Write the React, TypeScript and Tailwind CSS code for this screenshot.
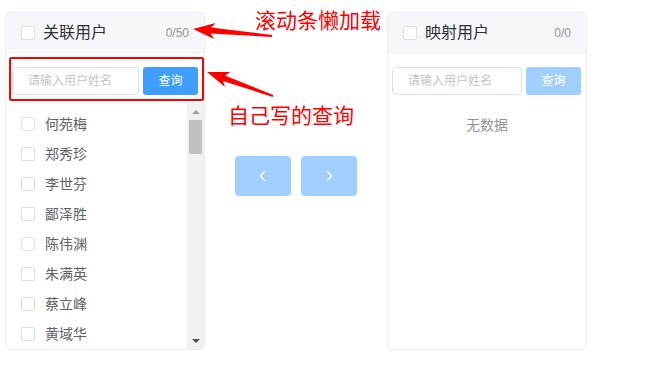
import React from 'react';

const names = ['何苑梅', '郑秀珍', '李世芬', '鄙泽胜', '陈伟渊', '朱满英', '蔡立峰', '黄域华'];

const font = { fontFamily: '"Liberation Sans", "Noto Sans CJK SC", sans-serif' };

function Checkbox() {
    return <span className="inline-block w-[14px] h-[14px] shrink-0 rounded-[2px] border border-[#dcdfe6] bg-white" />;
}

function PanelHeader({ title, count, padLeft }: { title: string; count: string; padLeft: string }) {
    return (
        <div className={`h-[40px] shrink-0 flex items-center bg-[#f5f7fa] border-b border-[#ebeef5] rounded-t-[4px] ${padLeft} pr-[15px]`}>
            <Checkbox />
            <span className="ml-[8px] text-[16px] text-[#303133] leading-none">{title}</span>
            <span className="ml-auto text-[12px] text-[#909399]">{count}</span>
        </div>
    );
}

function Filter({ inputW, active, pad }: { inputW: string; active: boolean; pad: string }) {
    return (
        <div className={`flex gap-[4px] pt-[14px] pb-[8px] ${pad}`}>
            <div className={`${inputW} h-[28px] rounded-[4px] border border-[#dcdfe6] bg-white flex items-center px-[15px] text-[12px] text-[#c0c4cc]`}>
                请输入用户姓名
            </div>
            <div
                className={`w-[55px] h-[28px] rounded-[3px] flex items-center justify-center text-[12px] text-white ${active ? 'bg-[#409eff]' : 'bg-[#a0cfff]'}`}
            >
                查询
            </div>
        </div>
    );
}

function FakeScrollbar() {
    return (
        <div className="w-[17px] shrink-0 bg-[#f1f1f1] flex flex-col items-center">
            <div className="h-[17px] flex items-center justify-center">
                <span className="w-0 h-0 border-x-[4px] border-x-transparent border-b-[4px] border-b-[#a3a3a3]" />
            </div>
            <div className="w-[13px] h-[34px] bg-[#c1c1c1]" />
            <div className="flex-1" />
            <div className="h-[17px] flex items-center justify-center">
                <span className="w-0 h-0 border-x-[4px] border-x-transparent border-t-[4px] border-t-[#505050]" />
            </div>
        </div>
    );
}

export default function App() {
    return (
        <div className="relative w-[652px] h-[367px] bg-white overflow-hidden" style={font}>
            <div className="flex items-start pt-[12px] pl-[5px]">
                {/* left panel */}
                <div className="w-[200px] h-[338px] border border-[#ebeef5] rounded-[4px] flex flex-col">
                    <PanelHeader title="关联用户" count="0/50" padLeft="pl-[15px]" />
                    <Filter inputW="w-[127px]" active pad="pl-[6px] pr-[5px]" />
                    <div className="flex-1 flex min-h-0 overflow-hidden rounded-b-[4px]">
                        <div className="flex-1 pt-[6px]">
                            {names.map((n) => (
                                <div key={n} className="h-[30px] flex items-center pl-[15px]">
                                    <Checkbox />
                                    <span className="ml-[10px] text-[14px] text-[#606266]">{n}</span>
                                </div>
                            ))}
                        </div>
                        <FakeScrollbar />
                    </div>
                </div>

                {/* transfer buttons */}
                <div className="flex gap-[10px] mt-[144px] mx-[30px]">
                    <div className="w-[56px] h-[40px] rounded-[4px] bg-[#a0cfff] flex items-center justify-center">
                        <svg width="10" height="12" viewBox="0 0 10 12" fill="none" stroke="white" strokeWidth="1.4">
                            <path d="M7 1 L2.5 6 L7 11" />
                        </svg>
                    </div>
                    <div className="w-[56px] h-[40px] rounded-[4px] bg-[#a0cfff] flex items-center justify-center">
                        <svg width="10" height="12" viewBox="0 0 10 12" fill="none" stroke="white" strokeWidth="1.4">
                            <path d="M3 1 L7.5 6 L3 11" />
                        </svg>
                    </div>
                </div>

                {/* right panel */}
                <div className="w-[200px] h-[338px] border border-[#ebeef5] rounded-[4px] flex flex-col">
                    <PanelHeader title="映射用户" count="0/0" padLeft="pl-[15px]" />
                    <Filter inputW="w-[130px]" active={false} pad="pl-[4px] pr-[5px]" />
                    <div className="pt-[12px] text-center text-[14px] text-[#909399]">无数据</div>
                </div>
            </div>

            {/* annotations */}
            <div className="absolute left-[9px] top-[57px] w-[195px] h-[44px] border-2 border-[#ff0000] rounded-[2px]" />
            <div className="absolute left-[255px] top-[7px] text-[21px] leading-[28px] text-[#ff0000]">滚动条懒加载</div>
            <div className="absolute left-[228px] top-[102px] text-[21px] leading-[28px] text-[#ff0000]">自己写的查询</div>
            <svg className="absolute inset-0 pointer-events-none" width="652" height="367">
                <polygon
                    fill="#ff0000"
                    points="193,29 215.6,22.9 211.2,27.6 272.1,35 271.9,37 210.6,33.6 214.2,38.9"
                />
                <polygon
                    fill="#ff0000"
                    points="207,72 230.4,72 224.9,75.4 273.3,95.1 272.7,96.9 222.9,81 225,87"
                />
            </svg>
        </div>
    );
}
